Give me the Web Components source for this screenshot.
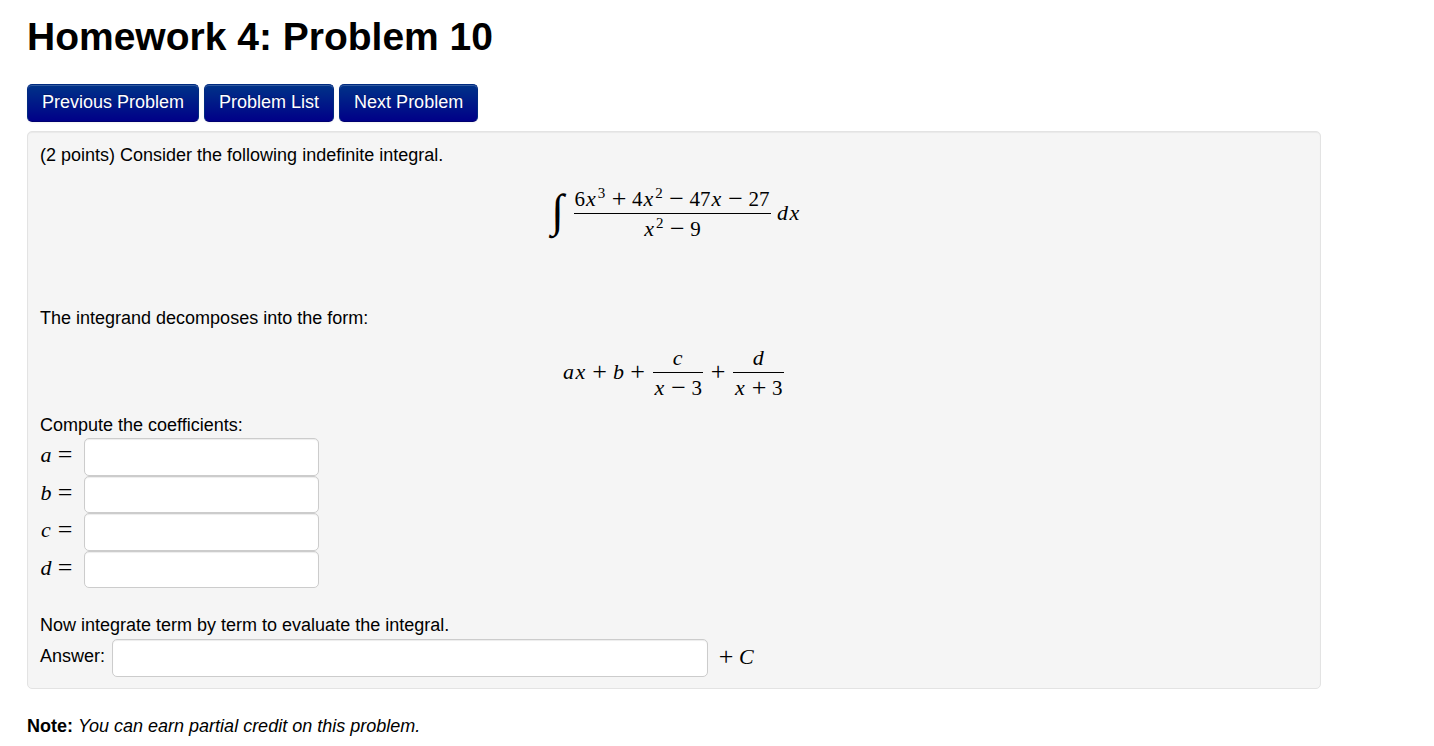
<!DOCTYPE html>
<html lang="en">
<head>
<meta charset="utf-8">
<title>Homework 4: Problem 10</title>
<style>
body { margin: 0; background: #fff; color: #000; font: 18px/25px "Liberation Sans", Arial, sans-serif; }
</style>
</head>
<body>
<homework-page></homework-page>

<template id="page-tpl">
<style>
:host { display: block; padding: 12px 113px 8px 27px; }
h1 { margin: 0; font-size: 39px; line-height: 50px; font-weight: bold; }
nav { display: flex; gap: 5px; margin: 22px 0 9px; }
p { margin: 0; }
.note { margin-top: 25px; }
.integral { padding: 17px 0 62px; }
.integral math-frac { margin-right: 6px; }
.form { padding: 13px 0 10px; }
.now { margin-top: 25px; }
.coefs { display: grid; grid-template-rows: repeat(4, 1fr); height: 150px; }
</style>
<h1>Homework 4: Problem 10</h1>
<nav aria-label="Problems">
  <nav-button>Previous Problem</nav-button>
  <nav-button>Problem List</nav-button>
  <nav-button>Next Problem</nav-button>
</nav>
<problem-panel>
  <p>(2 points) Consider the following indefinite integral.</p>
  <math-row class="integral">
    <math-int></math-int>
    <math-frac>
      <math-n slot="top">6</math-n><math-v slot="top">x</math-v><math-sup slot="top">3</math-sup><math-op slot="top">+</math-op><math-n slot="top">4</math-n><math-v slot="top">x</math-v><math-sup slot="top">2</math-sup><math-op slot="top">−</math-op><math-n slot="top">47</math-n><math-v slot="top">x</math-v><math-op slot="top">−</math-op><math-n slot="top">27</math-n>
      <math-v slot="bottom">x</math-v><math-sup slot="bottom">2</math-sup><math-op slot="bottom">−</math-op><math-n slot="bottom">9</math-n>
    </math-frac>
    <math-v>d</math-v><math-v>x</math-v>
  </math-row>
  <p>The integrand decomposes into the form:</p>
  <math-row class="form">
    <math-v>a</math-v><math-v>x</math-v><math-op>+</math-op><math-v>b</math-v><math-op>+</math-op>
    <math-frac>
      <math-v slot="top">c</math-v>
      <math-v slot="bottom">x</math-v><math-op slot="bottom">−</math-op><math-n slot="bottom">3</math-n>
    </math-frac>
    <math-op>+</math-op>
    <math-frac>
      <math-v slot="top">d</math-v>
      <math-v slot="bottom">x</math-v><math-op slot="bottom">+</math-op><math-n slot="bottom">3</math-n>
    </math-frac>
  </math-row>
  <p>Compute the coefficients:</p>
  <div class="coefs">
    <coef-field name="a"></coef-field>
    <coef-field name="b"></coef-field>
    <coef-field name="c"></coef-field>
    <coef-field name="d"></coef-field>
  </div>
  <p class="now">Now integrate term by term to evaluate the integral.</p>
  <answer-field></answer-field>
</problem-panel>
<p class="note"><b>Note:</b> <i>You can earn partial credit on this problem.</i></p>
</template>

<script>
const define = (name, html) => customElements.define(name, class extends HTMLElement {
  constructor() {
    super();
    this.attachShadow({ mode: "open" }).innerHTML = html;
  }
});

const serif = `font-family: "Liberation Serif", "Times New Roman", serif;`;
const inputCss = `
  input { box-sizing: border-box; height: 100%; margin: 0; padding: 5px 8px; border: 1px solid #ccc;
    border-radius: 5px; background: #fff; box-shadow: inset 0 1px 1px rgba(0,0,0,.075);
    font: inherit; color: #555; }`;

define("nav-button", `<style>
  :host { display: block; }
  button { display: block; height: 38px; margin: 0; padding: 0 14px 2px; border: 1px solid #002a80;
    border-bottom-color: #000070; border-radius: 5px; color: #fff; font: inherit; cursor: pointer;
    background: linear-gradient(#003388, #000088);
    box-shadow: inset 0 1px 0 rgba(255,255,255,.2), 0 1px 2px rgba(0,0,0,.05);
    text-shadow: 0 -1px 0 rgba(0,0,0,.25); }
</style><button type="button"><slot></slot></button>`);

define("problem-panel", `<style>
  :host { display: block; padding: 11px 12px; border: 1px solid #e3e3e3; border-radius: 5px;
    background: #f5f5f5; box-shadow: inset 0 1px 1px rgba(0,0,0,.05); }
</style><slot></slot>`);

define("math-row", `<style>
  :host { display: flex; justify-content: center; align-items: center; ${serif} font-size: 21px; line-height: 28px; }
  ::slotted(math-v), ::slotted(math-op) { padding-bottom: 4px; }
</style><slot></slot>`);

define("math-n", `<style>:host { display: block; ${serif} font-size: 21px; }</style><slot></slot>`);
define("math-v", `<style>
  :host { display: block; min-width: 12px; text-align: center; ${serif} font-size: 22px; font-style: italic; }
</style><slot></slot>`);
define("math-sup", `<style>
  :host { display: block; width: 9px; padding-bottom: 12px; text-align: center; ${serif} font-size: 15px; line-height: 16px; }
</style><slot></slot>`);
define("math-op", `<style>
  :host { display: block; width: 16px; margin: 0 5px; text-align: center; ${serif} font-size: 26px; }
</style><slot></slot>`);
define("math-int", `<style>
  :host { display: block; width: 20px; margin-right: 4px; padding-bottom: 8px; text-align: center;
    ${serif} font-size: 46px; font-style: italic; line-height: 50px; }
</style>∫`);
define("math-frac", `<style>
  :host { display: grid; margin: 0 2px; }
  div { display: flex; align-items: center; justify-content: center; height: 30px; padding: 0 1px; }
  .top { height: 28px; border-bottom: 1px solid #000; }
</style><div class="top"><slot name="top"></slot></div><div><slot name="bottom"></slot></div>`);

customElements.define("coef-field", class extends HTMLElement {
  connectedCallback() {
    const name = this.getAttribute("name");
    this.attachShadow({ mode: "open" }).innerHTML = `<style>
      :host { display: flex; align-items: center; min-height: 0; }
      label { display: flex; align-items: center; width: 44px; padding-bottom: 4px; ${serif} }
      ${inputCss}
      input { width: 235px; }
    </style>
    <label for="field"><math-v>${name}</math-v><math-op>=</math-op></label>
    <input id="field" type="text" autocomplete="off">`;
  }
});

define("answer-field", `<style>
  :host { display: flex; align-items: center; height: 38px; margin-top: 1px; }
  label { width: 72px; padding-bottom: 4px; }
  ${inputCss}
  input { width: 596px; margin-right: 5px; }
  math-op, math-v { padding-bottom: 4px; }
</style><label for="answer">Answer:</label><input id="answer" type="text" autocomplete="off"><math-op>+</math-op><math-v>C</math-v>`);

customElements.define("homework-page", class extends HTMLElement {
  constructor() {
    super();
    this.attachShadow({ mode: "open" }).append(document.getElementById("page-tpl").content.cloneNode(true));
  }
});
</script>
</body>
</html>
